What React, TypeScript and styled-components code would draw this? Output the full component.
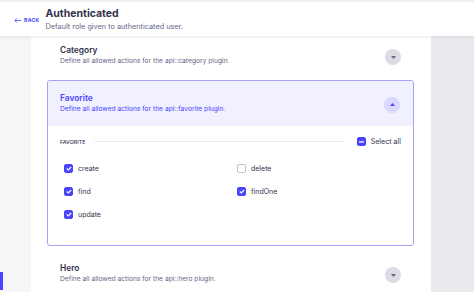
import styled, { createGlobalStyle } from "styled-components";

const GlobalStyle = createGlobalStyle`
  html, body {
    margin: 0;
    padding: 0;
    background: #ffffff;
    font-family: Inter, "Noto Sans", sans-serif;
  }
  * { box-sizing: border-box; }
`;

const Page = styled.div`
  width: 474px;
  height: 292px;
  overflow: hidden;
  display: flex;
  flex-direction: column;
  background: #fff;
`;

const Header = styled.header`
  height: 36px;
  flex-shrink: 0;
  display: flex;
  align-items: center;
  padding-left: 14px;
  gap: 6px;
  border-top: 2px solid #f0f0f4;
  box-shadow: 0 1px 3px rgba(33, 33, 52, 0.1);
  position: relative;
  z-index: 1;
  background: #fff;
`;

const Back = styled.span`
  display: flex;
  align-items: center;
  gap: 3px;
  color: #4945ff;
  font-size: 5.2px;
  font-weight: 700;
  letter-spacing: 0.2px;
  margin-top: 2px;
`;

const HeadText = styled.div`
  display: flex;
  flex-direction: column;
`;

const PageTitle = styled.h1`
  margin: 0;
  font-size: 10.5px;
  line-height: 14px;
  font-weight: 700;
  color: #32324d;
`;

const PageSub = styled.p`
  margin: 1px 0 0;
  font-size: 7.3px;
  color: #666687;
`;

const Body = styled.div`
  flex: 1;
  display: flex;
`;

const LeftRail = styled.div`
  width: 31px;
  background: #f6f6f9;
  display: flex;
  flex-direction: column;
  justify-content: flex-end;
  padding-bottom: 8px;
`;

const RailMark = styled.div`
  width: 3px;
  height: 18px;
  background: #4945ff;
`;

const Main = styled.main`
  width: 400px;
  background: #fff;
  display: flex;
  flex-direction: column;
`;

const RightRail = styled.div`
  flex: 1;
  background: #eaeaef;
`;

const Section = styled.div<{ $open?: boolean; $gap?: number }>`
  display: flex;
  align-items: center;
  justify-content: space-between;
  padding: ${(p) => (p.$open ? "0 13px 0 12px" : "0 30px 4px 29px")};
  margin-top: ${(p) => p.$gap ?? 0}px;
  height: ${(p) => (p.$open ? "45px" : "44px")};
  flex-shrink: 0;
  background: ${(p) => (p.$open ? "#f0f0ff" : "transparent")};
`;

const SectionText = styled.div`
  display: flex;
  flex-direction: column;
`;

const SectionTitle = styled.span<{ $open?: boolean }>`
  font-size: 8.4px;
  font-weight: 600;
  line-height: 11px;
  color: ${(p) => (p.$open ? "#4945ff" : "#32324d")};
`;

const SectionDesc = styled.span<{ $open?: boolean }>`
  font-size: 6.7px;
  line-height: 11px;
  color: ${(p) => (p.$open ? "#4945ff" : "#666687")};
`;

const Toggle = styled.span<{ $open?: boolean }>`
  width: 16px;
  height: 16px;
  border-radius: 50%;
  display: flex;
  align-items: center;
  justify-content: center;
  background: ${(p) => (p.$open ? "#d9d8ff" : "#dcdce4")};
  color: ${(p) => (p.$open ? "#4945ff" : "#666687")};
  margin-top: 2px;
`;

const Card = styled.div`
  margin: 0 17px 0 16px;
  border: 1px solid #a5a1f5;
  border-radius: 3px;
  overflow: hidden;
  height: 166px;
  flex-shrink: 0;
  display: flex;
  flex-direction: column;
`;

const CardBody = styled.div`
  padding: 11px 12px 0 12px;
`;

const GroupHead = styled.div`
  display: flex;
  align-items: center;
  gap: 9px;
`;

const GroupLabel = styled.span`
  font-size: 5.2px;
  font-weight: 500;
  color: #32324d;
  letter-spacing: 0.1px;
`;

const Rule = styled.div`
  flex: 1;
  height: 1px;
  background: #eaeaef;
`;

const SelectAll = styled.label`
  display: flex;
  align-items: center;
  gap: 5px;
  font-size: 7.1px;
  color: #32324d;
  margin-left: 4px;
`;

const Grid = styled.div`
  display: grid;
  grid-template-columns: 173px 1fr;
  row-gap: 14px;
  padding: 18px 0 0 4px;
`;

const Item = styled.label`
  display: flex;
  align-items: center;
  gap: 5px;
  font-size: 7px;
  color: #32324d;
  height: 9px;
`;

const Box = styled.span<{ $checked?: boolean }>`
  width: 9px;
  height: 9px;
  border-radius: 2px;
  display: flex;
  align-items: center;
  justify-content: center;
  background: ${(p) => (p.$checked ? "#4945ff" : "#fff")};
  border: 1px solid ${(p) => (p.$checked ? "#4945ff" : "#c0c0cf")};
`;

const Check = () => (
  <svg width="6" height="5" viewBox="0 0 6 5">
    <path d="M0.8 2.5 L2.3 4 L5.2 1" fill="none" stroke="#fff" strokeWidth="1.1" />
  </svg>
);

const Dash = () => (
  <svg width="5" height="2" viewBox="0 0 5 2">
    <rect x="0" y="0.3" width="5" height="1.3" fill="#fff" />
  </svg>
);

const Caret = ({ up }: { up?: boolean }) => (
  <svg width="5" height="3" viewBox="0 0 5 3">
    <path d={up ? "M0 3 L2.5 0 L5 3 Z" : "M0 0 L5 0 L2.5 3 Z"} fill="currentColor" />
  </svg>
);

const actions: { name: string; checked: boolean }[] = [
  { name: "create", checked: true },
  { name: "delete", checked: false },
  { name: "find", checked: true },
  { name: "findOne", checked: true },
  { name: "update", checked: true },
];

const App = () => (
  <>
    <GlobalStyle />
    <Page>
      <Header>
        <Back>
          <svg width="7" height="5" viewBox="0 0 7 5">
            <path d="M7 2.5 H1 M2.8 0.6 L0.8 2.5 L2.8 4.4" fill="none" stroke="#4945ff" strokeWidth="0.8" />
          </svg>
          BACK
        </Back>
        <HeadText>
          <PageTitle>Authenticated</PageTitle>
          <PageSub>Default role given to authenticated user.</PageSub>
        </HeadText>
      </Header>
      <Body>
        <LeftRail>
          <RailMark />
        </LeftRail>
        <Main>
          <Section>
            <SectionText>
              <SectionTitle>Category</SectionTitle>
              <SectionDesc>Define all allowed actions for the api::category plugin.</SectionDesc>
            </SectionText>
            <Toggle>
              <Caret />
            </Toggle>
          </Section>
          <Card>
            <Section $open>
              <SectionText>
                <SectionTitle $open>Favorite</SectionTitle>
                <SectionDesc $open>Define all allowed actions for the api::favorite plugin.</SectionDesc>
              </SectionText>
              <Toggle $open>
                <Caret up />
              </Toggle>
            </Section>
            <CardBody>
              <GroupHead>
                <GroupLabel>FAVORITE</GroupLabel>
                <Rule />
                <SelectAll>
                  <Box $checked>
                    <Dash />
                  </Box>
                  Select all
                </SelectAll>
              </GroupHead>
              <Grid>
                {actions.map((a) => (
                  <Item key={a.name}>
                    <Box $checked={a.checked}>{a.checked && <Check />}</Box>
                    {a.name}
                  </Item>
                ))}
              </Grid>
            </CardBody>
          </Card>
          <Section $gap={8}>
            <SectionText>
              <SectionTitle>Hero</SectionTitle>
              <SectionDesc>Define all allowed actions for the api::hero plugin.</SectionDesc>
            </SectionText>
            <Toggle>
              <Caret />
            </Toggle>
          </Section>
        </Main>
        <RightRail />
      </Body>
    </Page>
  </>
);

export default App;
